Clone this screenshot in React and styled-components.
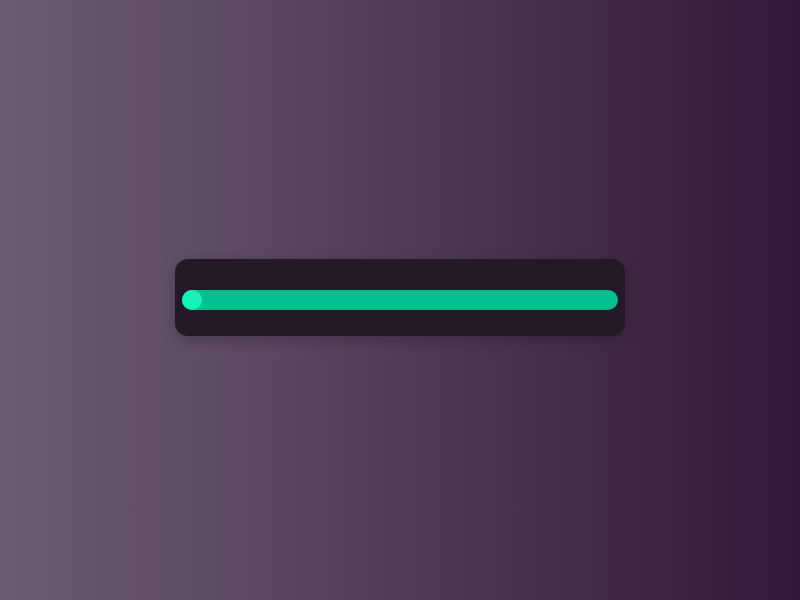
import React from "react";
import styled, { createGlobalStyle } from "styled-components";

const GlobalStyle = createGlobalStyle`
  html, body {
    margin: 0;
    padding: 0;
    height: 100%;
  }
  body {
    font-family: "Inter", "Liberation Sans", sans-serif;
  }
  #root {
    height: 100%;
  }
`;

const Page = styled.main`
  height: 100%;
  display: flex;
  align-items: flex-start;
  justify-content: center;
  padding-top: 259px;
  box-sizing: border-box;
  background: linear-gradient(90deg, #6c5b71 0%, #5a4660 35%, #47314d 65%, #33193a 100%);
`;

const Card = styled.div`
  width: 450px;
  box-sizing: border-box;
  padding: 31px 7px 26px;
  background: #241a27;
  border-radius: 13px;
  box-shadow: 0 4px 14px rgba(20, 8, 24, 0.25);
`;

const Track = styled.div`
  position: relative;
  height: 20px;
  border-radius: 10px;
  background: #01bf8f;
`;

const Thumb = styled.span`
  position: absolute;
  top: 0;
  width: 20px;
  height: 20px;
  border-radius: 50%;
  background: #15f2b7;
`;

function Slider({ value, max }) {
  const pct = value / max;
  return (
    <Track>
      <Thumb style={{ left: `calc(${pct * 100}% - ${pct * 20}px)` }} />
    </Track>
  );
}

export default function App() {
  return (
    <>
      <GlobalStyle />
      <Page>
        <Card>
          <Slider value={0} max={100} />
        </Card>
      </Page>
    </>
  );
}
